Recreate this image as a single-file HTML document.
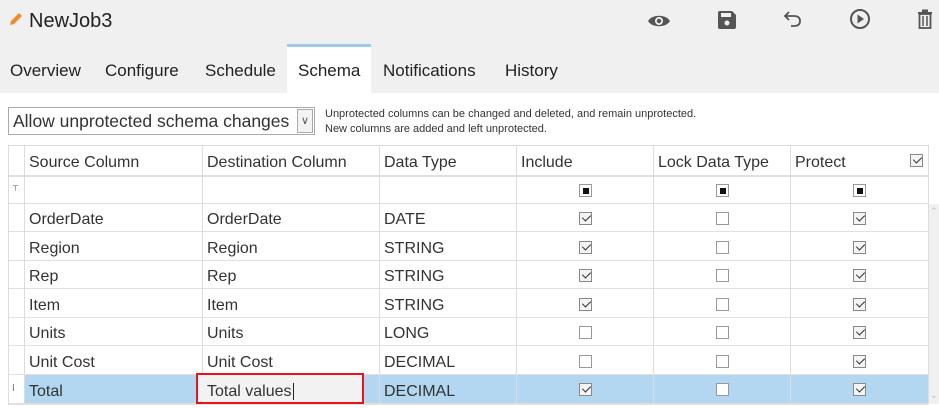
<!DOCTYPE html>
<html><head><meta charset="utf-8"><style>
*{margin:0;padding:0;box-sizing:border-box}
body{width:939px;height:408px;overflow:hidden;background:#fff;font-family:"Liberation Sans",sans-serif;color:#222;position:relative}
.a{position:absolute}
.hdr{left:0;top:0;width:939px;height:93px;background:#f0f0f0}
.tab{top:61px;font-size:17px;color:#222}
.cell{position:absolute;font-size:16px;line-height:28px;color:#333;white-space:nowrap;margin-top:2px}
.vl{position:absolute;top:145px;width:1px;height:259px;background:#dcdcdc}
.hl{position:absolute;left:8px;width:920px;height:2px;background:#e0e0e0}
.cb{position:absolute;width:13px;height:13px;border:1px solid #999;background:#fff}
.ck{border-color:#888;background:#f4f4f4}
.ck::after{content:"";position:absolute;left:3.5px;top:0px;width:4px;height:7px;border:solid #333;border-width:0 1.5px 1.5px 0;transform:rotate(45deg)}
.fl::after{content:"";position:absolute;left:2.5px;top:2.5px;width:6px;height:6px;background:#111}
</style></head><body>
<div class="a hdr"></div>
<svg class="a" style="left:8px;top:11px" width="16" height="16" viewBox="0 0 16 16"><path d="M2 14 L3 10 L11 2 L14 5 L6 13 Z" fill="#f08a2c"/></svg>
<div class="a" style="left:29px;top:10px;font-size:20px;color:#222">NewJob3</div>
<svg class="a" style="left:647px;top:12px" width="24" height="18" viewBox="0 0 24 18"><path d="M1 9 C5 2 19 2 23 9 C19 16 5 16 1 9Z" fill="#555"/><circle cx="12" cy="9" r="4" fill="#f0f0f0"/><circle cx="12" cy="9" r="2.2" fill="#555"/></svg>
<svg class="a" style="left:717px;top:10px" width="20" height="20" viewBox="0 0 20 20"><path d="M1 3 Q1 1 3 1 L15 1 L19 5 L19 17 Q19 19 17 19 L3 19 Q1 19 1 17Z" fill="#555"/><rect x="4" y="3" width="10" height="4" fill="#f0f0f0"/><circle cx="10" cy="13" r="2.5" fill="#f0f0f0"/></svg>
<svg class="a" style="left:783px;top:10px" width="20" height="18" viewBox="0 0 20 18"><path d="M6 2 L2 6 L6 10 M2 6 L11 6 Q17 6 17 11 Q17 16 11 16 L8 16" fill="none" stroke="#555" stroke-width="1.8"/></svg>
<svg class="a" style="left:849px;top:8px" width="22" height="22" viewBox="0 0 22 22"><circle cx="11" cy="11" r="9" fill="none" stroke="#555" stroke-width="2"/><path d="M8.5 6.5 L15 11 L8.5 15.5Z" fill="#555"/></svg>
<svg class="a" style="left:917px;top:9px" width="16" height="20" viewBox="0 0 16 20"><rect x="1" y="3" width="14" height="2" fill="#555"/><rect x="5" y="0.5" width="6" height="3" fill="#555"/><rect x="2.5" y="5" width="11" height="14" fill="none" stroke="#555" stroke-width="1.8"/><path d="M6 7v10M10 7v10" stroke="#555" stroke-width="1.5"/></svg>
<div class="a" style="left:287px;top:44px;width:84px;height:49px;background:#fff;border-top:3px solid #9fcbe8"></div>
<div class="a tab" style="left:10px">Overview</div>
<div class="a tab" style="left:105px">Configure</div>
<div class="a tab" style="left:205px">Schedule</div>
<div class="a tab" style="left:298px">Schema</div>
<div class="a tab" style="left:383px">Notifications</div>
<div class="a tab" style="left:505px">History</div>
<div class="a" style="left:8px;top:107px;width:307px;height:28px;border:1px solid #aaa;background:#fff"></div>
<div class="a" style="left:13px;top:111px;font-size:17.5px;color:#333">Allow unprotected schema changes</div>
<div class="a" style="left:297px;top:109px;width:16px;height:24px;border:1px solid #aaa;background:#f3f3f3;font-size:11px;text-align:center;line-height:22px;color:#555">&#8744;</div>
<div class="a" style="left:325px;top:107px;font-size:11px;line-height:15px;color:#333">Unprotected columns can be changed and deleted, and remain unprotected.<br>New columns are added and left unprotected.</div>
<div class="a" style="left:8px;top:145px;width:920px;height:1px;background:#dcdcdc"></div>
<div class="a" style="left:24px;top:375px;width:904px;height:28px;background:#b3d7f0"></div>
<div class="a" style="left:928px;top:204px;width:11px;height:200px;background:#f0f0f0"></div>
<div class="a" style="left:930px;top:206px;font-size:9px;color:#bbb">&#8963;</div>
<div class="a" style="left:930px;top:390px;font-size:9px;color:#bbb">&#8964;</div>
<div class="hl" style="top:175px"></div>
<div class="hl" style="top:203px;height:1px"></div>
<div class="hl" style="top:231px;height:1px"></div>
<div class="hl" style="top:260px;height:1px"></div>
<div class="hl" style="top:288px;height:1px"></div>
<div class="hl" style="top:317px;height:1px"></div>
<div class="hl" style="top:345px;height:1px"></div>
<div class="hl" style="top:374px;height:1px"></div>
<div class="hl" style="top:403px;height:2px"></div>
<div class="vl" style="left:8px"></div>
<div class="vl" style="left:24px"></div>
<div class="vl" style="left:202px"></div>
<div class="vl" style="left:379px"></div>
<div class="vl" style="left:516px"></div>
<div class="vl" style="left:653px"></div>
<div class="vl" style="left:790px"></div>
<div class="vl" style="left:928px"></div>
<div class="cell" style="left:29px;top:147px">Source Column</div>
<div class="cell" style="left:207px;top:147px">Destination Column</div>
<div class="cell" style="left:384px;top:147px">Data Type</div>
<div class="cell" style="left:521px;top:147px">Include</div>
<div class="cell" style="left:658px;top:147px">Lock Data Type</div>
<div class="cell" style="left:795px;top:147px">Protect</div>
<div class="cb ck" style="left:910px;top:154px"></div>
<div class="a" style="left:12px;top:184px;font-size:8px;color:#555">&#8868;</div>
<div class="cb fl" style="left:579px;top:184px"></div>
<div class="cb fl" style="left:716px;top:184px"></div>
<div class="cb fl" style="left:853px;top:184px"></div>

<div class="cell" style="left:29px;top:204px">OrderDate</div><div class="cell" style="left:207px;top:204px">OrderDate</div><div class="cell" style="left:384px;top:204px">DATE</div>
<div class="cell" style="left:29px;top:233px">Region</div><div class="cell" style="left:207px;top:233px">Region</div><div class="cell" style="left:384px;top:233px">STRING</div>
<div class="cell" style="left:29px;top:261px">Rep</div><div class="cell" style="left:207px;top:261px">Rep</div><div class="cell" style="left:384px;top:261px">STRING</div>
<div class="cell" style="left:29px;top:290px">Item</div><div class="cell" style="left:207px;top:290px">Item</div><div class="cell" style="left:384px;top:290px">STRING</div>
<div class="cell" style="left:29px;top:318px">Units</div><div class="cell" style="left:207px;top:318px">Units</div><div class="cell" style="left:384px;top:318px">LONG</div>
<div class="cell" style="left:29px;top:347px">Unit Cost</div><div class="cell" style="left:207px;top:347px">Unit Cost</div><div class="cell" style="left:384px;top:347px">DECIMAL</div>
<div class="a" style="left:12px;top:383px;font-size:10px;color:#777">I</div>
<div class="cell" style="left:29px;top:376px">Total</div>
<div class="a" style="left:196px;top:373px;width:168px;height:31px;border:2px solid #e8141c;background:#f2f2f2"></div>
<div class="cell" style="left:207px;top:376px">Total values<span style="border-left:1px solid #222;margin-left:1px"></span></div>
<div class="cell" style="left:384px;top:376px">DECIMAL</div>

<div class="cb ck" style="left:579px;top:212px"></div>
<div class="cb ck" style="left:579px;top:241px"></div>
<div class="cb ck" style="left:579px;top:269px"></div>
<div class="cb ck" style="left:579px;top:298px"></div>
<div class="cb" style="left:579px;top:326px"></div>
<div class="cb" style="left:579px;top:355px"></div>
<div class="cb ck" style="left:579px;top:383px"></div>
<div class="cb" style="left:716px;top:212px"></div>
<div class="cb" style="left:716px;top:241px"></div>
<div class="cb" style="left:716px;top:269px"></div>
<div class="cb" style="left:716px;top:298px"></div>
<div class="cb" style="left:716px;top:326px"></div>
<div class="cb" style="left:716px;top:355px"></div>
<div class="cb" style="left:716px;top:383px"></div>
<div class="cb ck" style="left:853px;top:212px"></div>
<div class="cb ck" style="left:853px;top:241px"></div>
<div class="cb ck" style="left:853px;top:269px"></div>
<div class="cb ck" style="left:853px;top:298px"></div>
<div class="cb ck" style="left:853px;top:326px"></div>
<div class="cb ck" style="left:853px;top:355px"></div>
<div class="cb ck" style="left:853px;top:383px"></div>
</body></html>
